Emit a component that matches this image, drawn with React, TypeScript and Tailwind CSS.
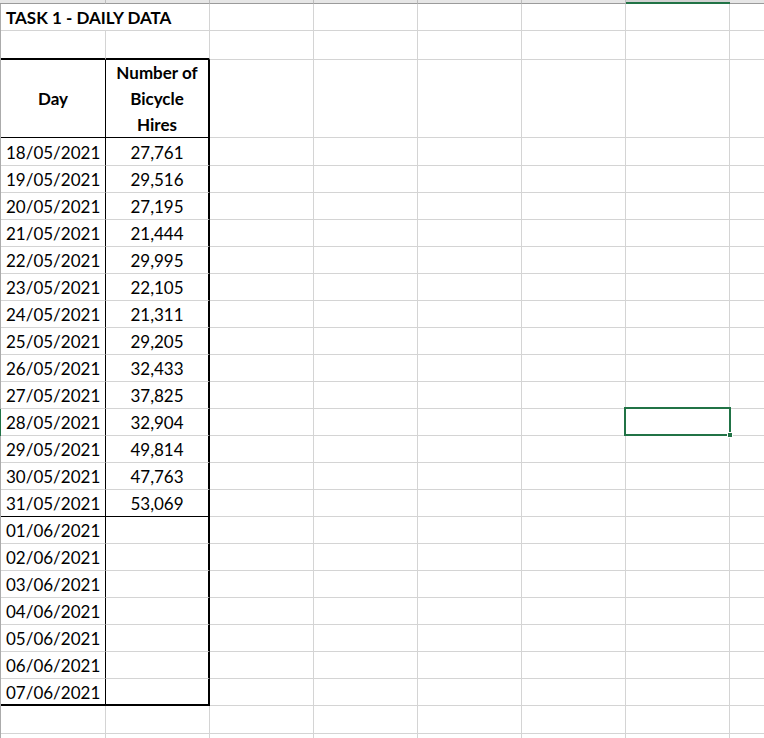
const rows: [string, string][] = [
  ["18/05/2021", "27,761"],
  ["19/05/2021", "29,516"],
  ["20/05/2021", "27,195"],
  ["21/05/2021", "21,444"],
  ["22/05/2021", "29,995"],
  ["23/05/2021", "22,105"],
  ["24/05/2021", "21,311"],
  ["25/05/2021", "29,205"],
  ["26/05/2021", "32,433"],
  ["27/05/2021", "37,825"],
  ["28/05/2021", "32,904"],
  ["29/05/2021", "49,814"],
  ["30/05/2021", "47,763"],
  ["31/05/2021", "53,069"],
  ["01/06/2021", ""],
  ["02/06/2021", ""],
  ["03/06/2021", ""],
  ["04/06/2021", ""],
  ["05/06/2021", ""],
  ["06/06/2021", ""],
  ["07/06/2021", ""],
];

// columns C..H, plain grid cells
const Rest = ({ selected = false }: { selected?: boolean }) => (
  <>
    <div className="w-[104px] shrink-0 border-r border-b border-[#d4d4d4]" />
    <div className="w-[104px] shrink-0 border-r border-b border-[#d4d4d4]" />
    <div className="w-[104px] shrink-0 border-r border-b border-[#d4d4d4]" />
    <div className="w-[104px] shrink-0 border-r border-b border-[#d4d4d4]" />
    <div className="relative w-[104px] shrink-0 border-r border-b border-[#d4d4d4]">
      {selected && (
        <div className="absolute -left-[2px] -top-[2px] z-10 h-[29px] w-[107px] border-2 border-[#217346]">
          <div className="absolute -bottom-[4px] -right-[4px] h-[6px] w-[6px] border border-white bg-[#217346]" />
        </div>
      )}
    </div>
    <div className="w-[104px] shrink-0 border-r border-b border-[#d4d4d4]" />
  </>
);

const Edge = ({ active = false }: { active?: boolean }) => (
  <div className={active ? "w-px shrink-0 bg-[#217346]" : "w-px shrink-0 bg-[#ababab]"} />
);

export default function App() {
  return (
    <div className="h-[738px] w-[764px] overflow-hidden bg-white font-['Lato','Liberation_Sans',sans-serif] text-[17px] leading-[20px] text-black">
      {/* column header strip, mostly scrolled out of view */}
      <div className="flex h-[4px]">
        <div className="w-px shrink-0 border-b border-[#9b9b9b] bg-[#e6e6e6]" />
        <div className="w-[105px] shrink-0 border-r border-b border-r-[#bdbdbd] border-b-[#9b9b9b] bg-[#e6e6e6]" />
        <div className="w-[104px] shrink-0 border-r border-b border-r-[#bdbdbd] border-b-[#9b9b9b] bg-[#e6e6e6]" />
        <div className="w-[104px] shrink-0 border-r border-b border-r-[#bdbdbd] border-b-[#9b9b9b] bg-[#e6e6e6]" />
        <div className="w-[104px] shrink-0 border-r border-b border-r-[#bdbdbd] border-b-[#9b9b9b] bg-[#e6e6e6]" />
        <div className="w-[104px] shrink-0 border-r border-b border-r-[#bdbdbd] border-b-[#9b9b9b] bg-[#e6e6e6]" />
        <div className="w-[104px] shrink-0 border-r border-b border-r-[#bdbdbd] border-b-[#9b9b9b] bg-[#e6e6e6]" />
        <div className="w-[104px] shrink-0 border-b-2 border-[#217346] bg-[#d2d2d2]" />
        <div className="w-[104px] shrink-0 border-b border-[#9b9b9b] bg-[#e6e6e6]" />
      </div>

      {/* title row, text spills over into column B */}
      <div className="flex h-[27px]">
        <Edge />
        <div className="relative z-[1] w-[105px] shrink-0 border-b border-[#d4d4d4]">
          <span className="absolute bottom-[2px] left-[5px] whitespace-nowrap font-bold">TASK 1 - DAILY DATA</span>
        </div>
        <div className="w-[104px] shrink-0 border-r border-b border-[#d4d4d4]" />
        <Rest />
      </div>

      {/* blank row above the table */}
      <div className="flex h-[29px]">
        <Edge />
        <div className="w-[105px] shrink-0 border-r border-b-2 border-r-[#d4d4d4] border-b-black" />
        <div className="w-[104px] shrink-0 border-r border-b-2 border-r-[#d4d4d4] border-b-black" />
        <Rest />
      </div>

      {/* table header */}
      <div className="flex h-[78px]">
        <Edge />
        <div className="flex w-[105px] shrink-0 items-center justify-center border-r border-b border-black font-bold">
          Day
        </div>
        <div className="flex w-[104px] shrink-0 flex-col items-center justify-center border-r-2 border-b border-black text-center font-bold leading-[26px]">
          <span>Number of</span>
          <span>Bicycle</span>
          <span>Hires</span>
        </div>
        <Rest />
      </div>

      {rows.map(([day, hires], i) => {
        const first = i === 0;
        const split = i === 13;
        const last = i === rows.length - 1;
        const height = first ? "flex h-[28px]" : "flex h-[27px]";
        const cellA = last
          ? "flex w-[105px] shrink-0 items-end border-r border-b-2 border-black pb-[1px] pl-[5px]"
          : split
            ? "flex w-[105px] shrink-0 items-end border-r border-b border-black pb-[2px] pl-[5px]"
            : "flex w-[105px] shrink-0 items-end border-r border-b border-r-black border-b-[#d4d4d4] pb-[2px] pl-[5px]";
        const cellB = last
          ? "flex w-[104px] shrink-0 items-end justify-center border-r-2 border-b-2 border-black pb-[1px]"
          : split
            ? "flex w-[104px] shrink-0 items-end justify-center border-r-2 border-b border-black pb-[2px]"
            : "flex w-[104px] shrink-0 items-end justify-center border-r-2 border-b border-r-black border-b-[#d4d4d4] pb-[2px]";
        return (
          <div key={day} className={height}>
            <Edge active={i === 10} />
            <div className={cellA}>{day}</div>
            <div className={cellB}>{hires}</div>
            <Rest selected={i === 10} />
          </div>
        );
      })}

      <div className="flex h-[28px]">
        <Edge />
        <div className="w-[105px] shrink-0 border-r border-b border-[#d4d4d4]" />
        <div className="w-[104px] shrink-0 border-r border-b border-[#d4d4d4]" />
        <Rest />
      </div>
      <div className="flex h-[27px]">
        <Edge />
        <div className="w-[105px] shrink-0 border-r border-b border-[#d4d4d4]" />
        <div className="w-[104px] shrink-0 border-r border-b border-[#d4d4d4]" />
        <Rest />
      </div>
    </div>
  );
}
